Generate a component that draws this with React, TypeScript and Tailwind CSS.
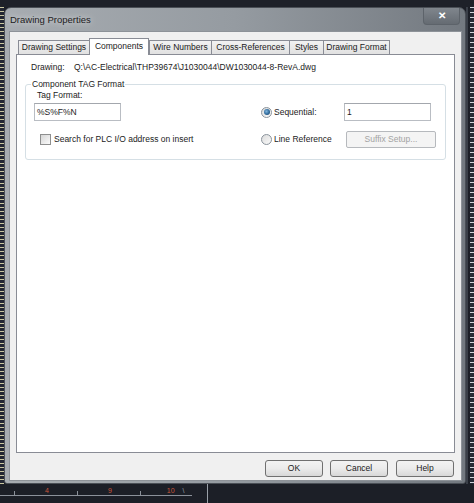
import React from 'react';

const tabs = [
  { label: 'Drawing Settings', w: 'w-[71px]' },
  { label: 'Components', w: 'w-[60px]', active: true },
  { label: 'Wire Numbers', w: 'w-[62px]' },
  { label: 'Cross-References', w: 'w-[78px]' },
  { label: 'Styles', w: 'w-[34px]' },
  { label: 'Drawing Format', w: 'w-[67px]' },
];

function Radio({ checked }: { checked?: boolean }) {
  return (
    <span className="w-[11px] h-[11px] shrink-0 rounded-full border border-[#8a939c] bg-gradient-to-br from-[#dcdcdc] to-[#fafafa] flex items-center justify-center">
      {checked && (
        <span className="w-[6px] h-[6px] rounded-full bg-[radial-gradient(circle_at_40%_40%,#7fb4dc_0%,#2f6a9c_55%,#173a5c_100%)]" />
      )}
    </span>
  );
}

function Button({ label, className = '' }: { label: string; className?: string }) {
  return (
    <button className={`h-[17px] rounded-[3px] border border-[#707070] bg-gradient-to-b from-[#f3f3f3] via-[#ebebeb] to-[#d8d8d8] text-[8.5px] leading-none text-[#1b1b1b] ${className}`}>
      {label}
    </button>
  );
}

function TitleBar() {
  return (
    <div className="h-[23px] shrink-0 flex items-start">
      <span className="ml-[5px] mt-[6px] text-[9.5px] leading-[11px] text-[#1d2022] [text-shadow:0_0_6px_rgba(255,255,255,0.8)]">
        Drawing Properties
      </span>
      <div className="ml-auto mr-[5px] w-[37px] h-[17px] rounded-b-[4px] border border-t-0 border-[#5d636a] bg-gradient-to-b from-[#80868d] to-[#656b72] flex items-center justify-center text-white text-[10px] font-bold leading-none">
        ✕
      </div>
    </div>
  );
}

function TabStrip() {
  return (
    <div className="h-[22px] shrink-0 flex items-end pl-[8px]">
      {tabs.map((t) =>
        t.active ? (
          <div
            key={t.label}
            className={`${t.w} h-[17px] -mb-[1px] relative z-10 bg-white border border-b-0 border-[#898c95] flex items-start justify-center pt-[2px] text-[8.5px] leading-[11px]`}
          >
            {t.label}
          </div>
        ) : (
          <div
            key={t.label}
            className={`${t.w} h-[14px] bg-gradient-to-b from-[#f2f2f2] to-[#e1e1e1] border border-b-0 border-r-0 last:border-r border-[#898c95] flex items-start justify-center pt-[1px] text-[8.5px] leading-[11px]`}
          >
            {t.label}
          </div>
        )
      )}
    </div>
  );
}

function ComponentsPanel() {
  return (
    <div className="ml-[6px] w-[439px] h-[399px] shrink-0 bg-white border border-[#898c95] text-[8.5px] leading-[11px]">
      <div className="flex pt-[7px] pl-[14px]">
        <span className="w-[43px]">Drawing:</span>
        <span>Q:\AC-Electrical\THP39674\J1030044\DW1030044-8-RevA.dwg</span>
      </div>

      <fieldset className="ml-[8px] mt-[6px] w-[421px] border border-[#d5dfe5] rounded-[3px]">
        <legend className="ml-[5px] px-[1px]">Component TAG Format</legend>
        <div className="flex pb-[11px]">
          <div className="w-[235px] shrink-0">
            <div className="pl-[11px]">Tag Format:</div>
            <div className="ml-[8px] mt-[2px] w-[87px] h-[18px] border border-[#b9bdc3] border-t-[#a3a7ad] flex items-center pl-[2px]">
              %S%F%N
            </div>
            <label className="ml-[14px] mt-[13px] flex items-center gap-[3px]">
              <span className="w-[11px] h-[11px] border border-[#8e8f8f] bg-gradient-to-br from-[#d6d6d6] to-[#fbfbfb]" />
              <span>Search for PLC I/O address on insert</span>
            </label>
          </div>
          <div className="flex flex-col">
            <div className="mt-[13px] flex items-center">
              <Radio checked />
              <span className="ml-[2px] w-[70px]">Sequential:</span>
              <div className="w-[87px] h-[18px] border border-[#b9bdc3] border-t-[#a3a7ad] flex items-center pl-[2px]">
                1
              </div>
            </div>
            <div className="mt-[10px] flex items-center">
              <Radio />
              <span className="ml-[2px] w-[72px]">Line Reference</span>
              <div className="w-[90px] h-[17px] rounded-[2px] border border-[#b6b9bd] bg-[#f4f4f4] flex items-center justify-center text-[#a3a3a3]">
                Suffix Setup...
              </div>
            </div>
          </div>
        </div>
      </fieldset>
    </div>
  );
}

function Dialog() {
  return (
    <div className="w-[462px] h-[477px] shrink-0 flex flex-col rounded-t-[7px] rounded-b-[3px] border border-[#4a4f56] bg-gradient-to-r from-[#a7acb1] via-[#959ba1] to-[#737980]">
      <TitleBar />
      <div className="ml-[4px] mr-[3px] h-[450px] shrink-0 flex flex-col bg-[#f0f0f0] border border-[#8d9298]">
        <TabStrip />
        <ComponentsPanel />
        <div className="mt-[7px] mr-[7px] flex justify-end gap-[7px]">
          <Button label="OK" className="w-[58px]" />
          <Button label="Cancel" className="w-[58px]" />
          <Button label="Help" className="w-[58px] ml-[1px]" />
        </div>
      </div>
    </div>
  );
}

function BottomRuler() {
  return (
    <div className="flex-1 flex">
      <div className="w-[192px] mt-[2px] h-[10px] border-b border-[#8b919a] flex items-end text-[7px] leading-[8px] text-[#c8553a]">
        <span className="ml-[14px] w-px h-[4px] bg-[#8b919a]" />
        <span className="ml-[30px]">4</span>
        <span className="ml-[28px] w-px h-[4px] bg-[#8b919a]" />
        <span className="ml-[30px]">9</span>
        <span className="ml-[28px] w-px h-[4px] bg-[#8b919a]" />
        <span className="ml-[26px]">10</span>
        <span className="ml-[8px] text-[#9aa0a8]">\</span>
      </div>
      <div className="ml-[15px] w-px bg-[#9aa0a8]" />
    </div>
  );
}

export default function App() {
  return (
    <div className="w-[474px] h-[503px] overflow-hidden flex flex-col bg-[#1c1f27] font-['Liberation_Sans',Arial,sans-serif] text-[#1b1b1b]">
      <div className="h-[7px] shrink-0 bg-[#1e2129]" />
      <div className="flex h-[477px] shrink-0">
        <div className="w-[4px] shrink-0 bg-[#232733] bg-[repeating-linear-gradient(to_bottom,#c9c6a0_0px,#c9c6a0_1px,transparent_1px,transparent_4px)]" />
        <Dialog />
        <div className="flex-1 flex">
          <div className="w-[2px] bg-[#3a3f48]" />
          <div className="flex-1 bg-[#252a36] bg-[repeating-linear-gradient(to_bottom,#cfd3da_0px,#cfd3da_1px,transparent_1px,transparent_5px)] ml-[2px]" />
        </div>
      </div>
      <BottomRuler />
    </div>
  );
}
